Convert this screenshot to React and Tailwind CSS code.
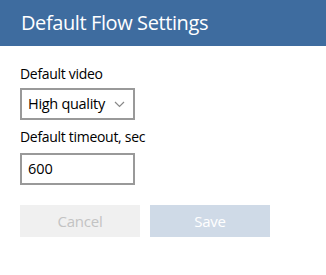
export default function App() {
  return (
    <div className="w-[326px] h-[275px] bg-white" style={{ fontFamily: '"Open Sans", "Noto Sans", sans-serif' }}>
      <div className="h-[46px] bg-[#3e6c9f] flex items-center px-[21px]">
        <h1 className="text-[20px] text-white leading-none tracking-[-0.4px]">Default Flow Settings</h1>
      </div>

      <div className="px-[20px] pt-[18px]">
        <p className="text-[14px] leading-[20px] text-black tracking-[-0.3px]">Default video</p>
        <div className="mt-[4px] w-[115px] h-[32px] border-2 border-[#999] flex items-center justify-between pl-[6px] pr-[8px]">
          <span className="text-[14.5px] text-black tracking-[-0.3px]">High quality</span>
          <svg width="11" height="7" viewBox="0 0 11 7" fill="none" stroke="#888" strokeWidth="1.2">
            <path d="M1 1l4.5 4.5L10 1" />
          </svg>
        </div>

        <p className="mt-[7px] text-[14px] leading-[20px] text-black tracking-[-0.3px]">Default timeout, sec</p>
        <div className="mt-[6px] w-[115px] h-[32px] border-2 border-[#999] flex items-center pl-[6px]">
          <span className="text-[14.5px] text-black">600</span>
        </div>

        <div className="mt-[20px] flex gap-[10px]">
          <button className="w-[120px] h-[32px] bg-[#f0f0f0] text-[#c3c3c3] text-[15px] tracking-[-0.2px]">Cancel</button>
          <button className="w-[120px] h-[32px] bg-[#cfdae7] text-white text-[15px] tracking-[-0.2px]">Save</button>
        </div>
      </div>
    </div>
  )
}
